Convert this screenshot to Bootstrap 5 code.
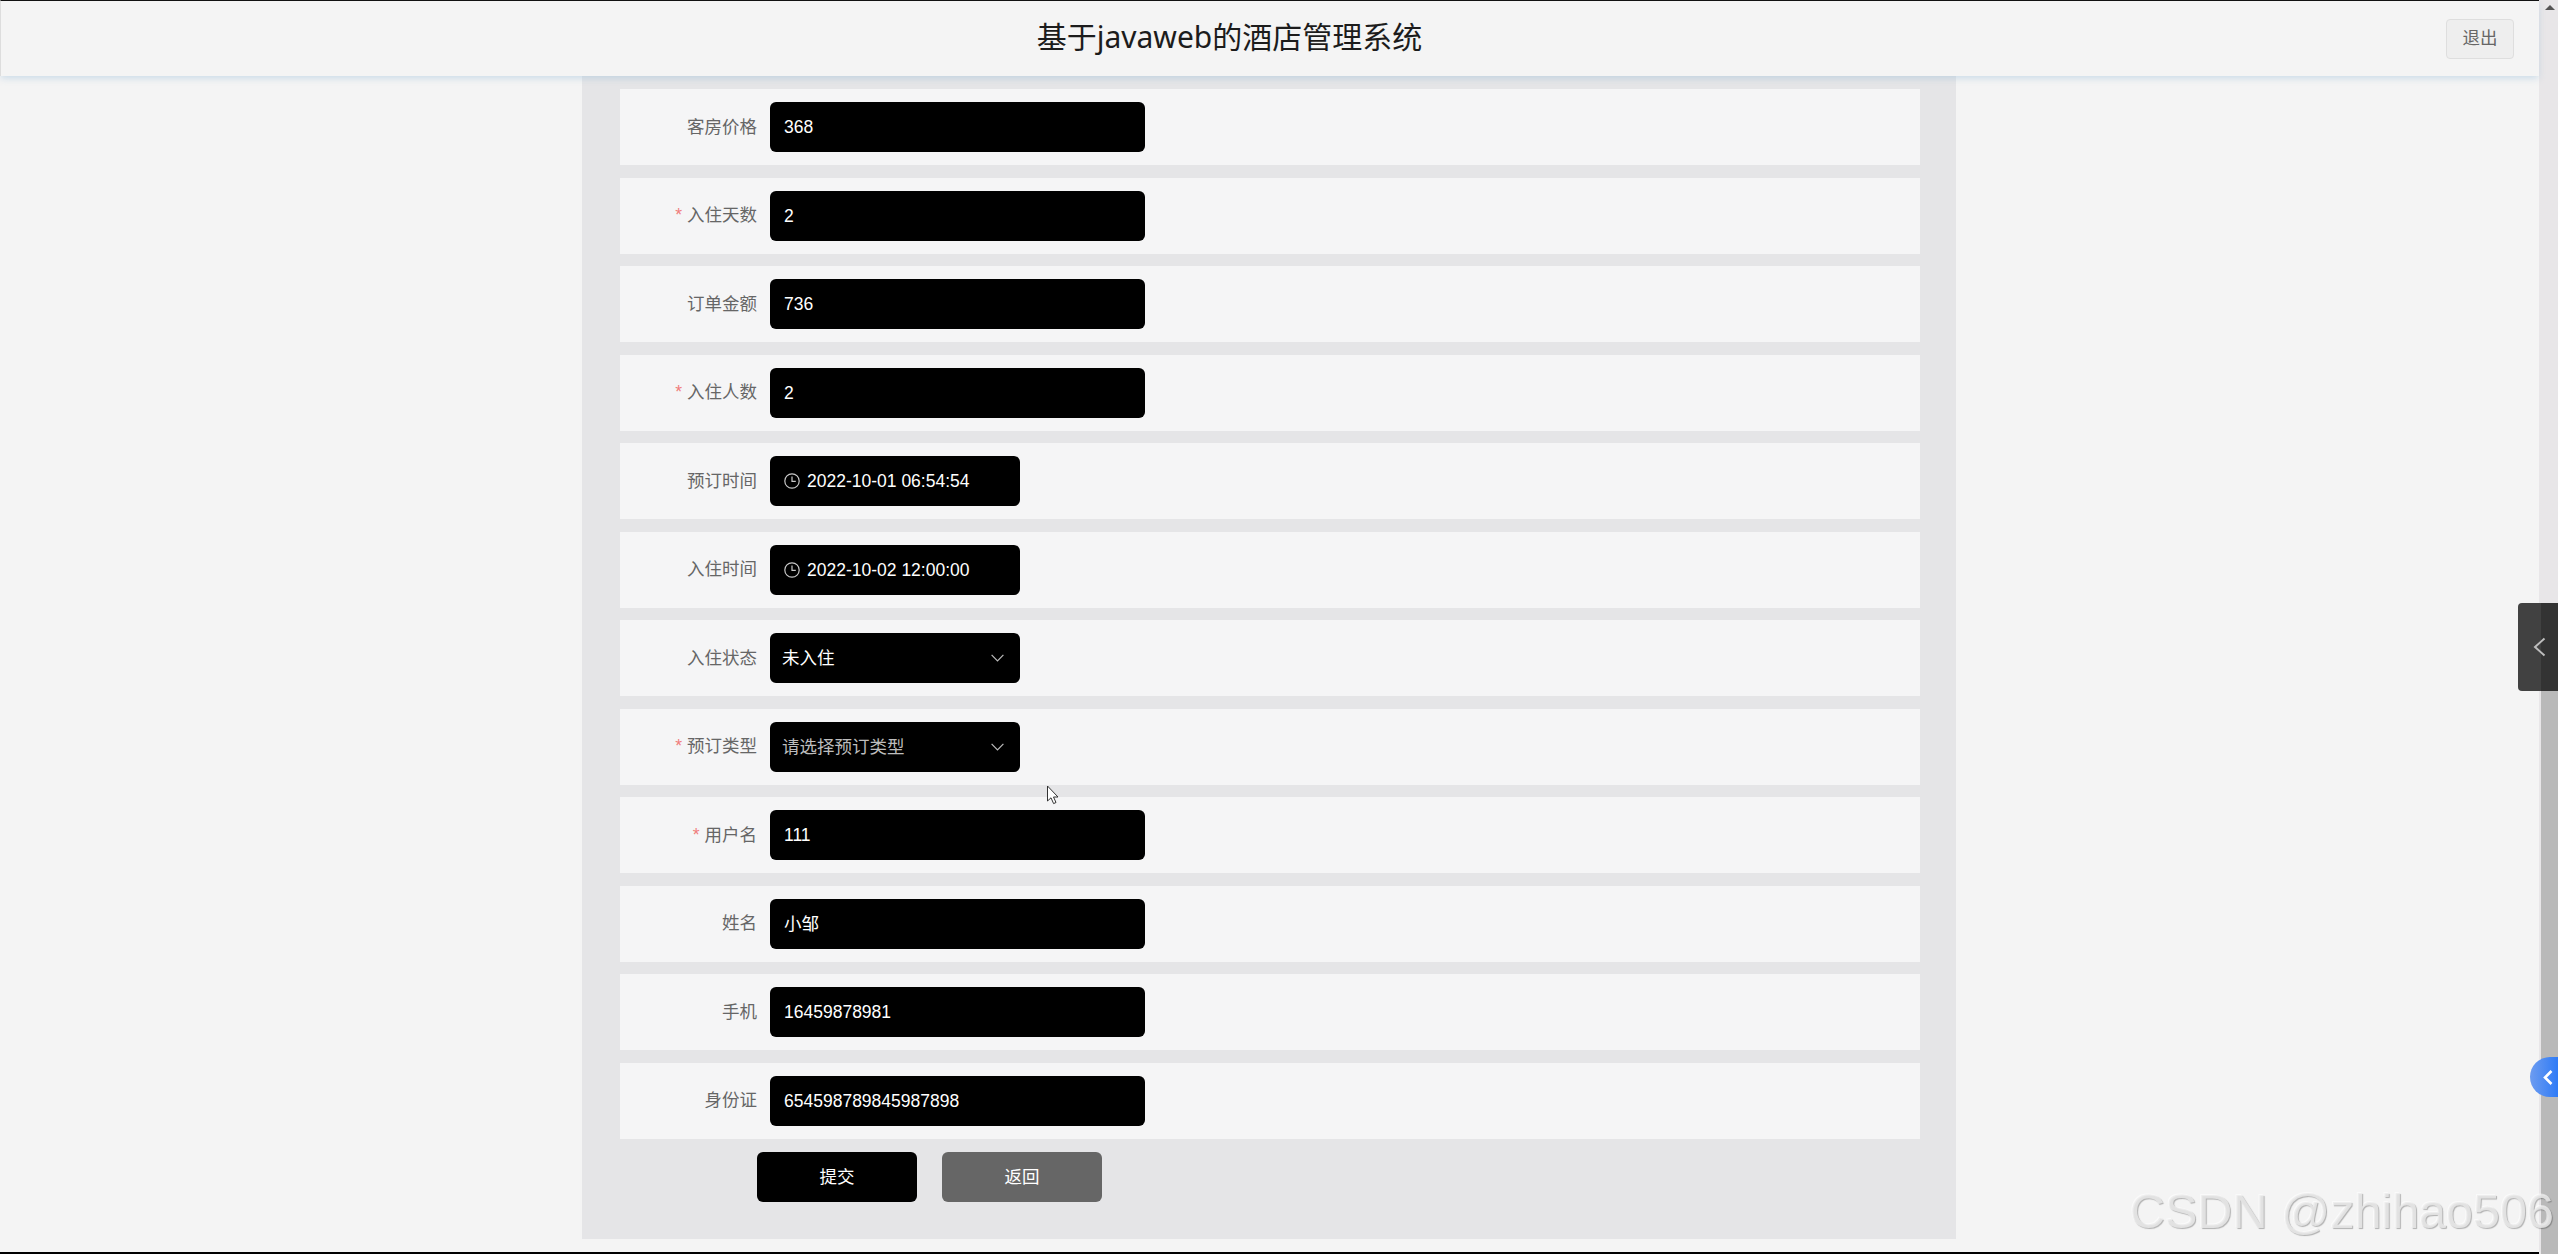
<!DOCTYPE html>
<html lang="zh">
<head>
<meta charset="utf-8">
<title>基于javaweb的酒店管理系统</title>
<link rel="stylesheet" href="https://cdn.jsdelivr.net/npm/bootstrap@5.3.0/dist/css/bootstrap.min.css">
<style>
html,body{height:100%;overflow:hidden;margin:0}
body{background:#f4f4f4;font-family:"Liberation Sans","Noto Sans CJK SC",sans-serif;font-size:17.5px;position:relative}
.shell{height:100vh}
.mainarea{width:2539px;flex:none;height:100%}
.topbar{height:76px;flex:none;border-top:1px solid #111;border-left:1px solid #ddd;background:#f4f4f4;box-shadow:0 3px 7px -1px rgba(140,180,215,.42);position:relative;z-index:2}
.sys-title{font-family:"Noto Sans","Noto Sans CJK SC",sans-serif;font-size:30px;color:#1c1c1c;line-height:1;padding:0 0 3px 12px;margin:0;font-weight:400}
.quit-btn{width:68px;height:40px;margin-right:25px;padding:0;background:#eee;border:1px solid #dedede;border-radius:4px;color:#666;font-size:17.5px}
.panel-box{width:1374px;margin-left:582px;background:#e5e5e7;padding:13px 36px 37px 38px}
.frow{height:76px;margin-bottom:12.5px;background:#f5f5f6}
.flabel{width:137px;margin-right:13px;color:#666;text-align:right;flex:none}
.req{color:#f07c7c;margin-right:5px}
.form-control.fld{width:375px;height:50px;background:#000;color:#fff;border:0;border-radius:6px;padding:0 14px;font-size:17.5px;line-height:50px;flex:none}
.form-control.fld-sm{width:250px}
.form-control.fld-sel{padding:0 16px 0 12px;width:250px}
.clock-ico{width:16px;height:16px;margin-right:7px;flex:none}
.chev-ico{width:13px;height:8px}
.ph{color:#bdbdbd}
.act-row{padding:1px 0 0 137px}
.btn.act-btn{width:160px;height:50px;padding:0;border:0;border-radius:6px;color:#fff;font-size:17.5px;background:#000}
.btn.act-btn.act-back{background:#666;margin-left:25px}
.footline{height:2px;background:#000;flex:none}
.scrollcol{width:19px;flex:none;background:#e8e6e8;height:100%}
.scroll-up{height:650px;padding:5px 0 0 6px;flex:none}
.scroll-up svg{display:block;width:10px;height:5px}
.scroll-thumb{margin-left:2px;background:#b9b9b9;flex:1 1 auto}
.tab-dark{position:absolute;right:0;top:603px;width:40px;height:88px;border-radius:4px 0 0 4px;background:linear-gradient(90deg,#414141 0,#414141 23px,#333 23px,#333 100%);z-index:3}
.tab-dark svg{position:absolute;left:15px;top:34px;width:13px;height:20px}
.tab-blue{position:absolute;right:0;top:1057px;width:28px;height:40px;border-radius:20px 0 0 20px;background:linear-gradient(90deg,#6d9cf0,#2f7bf6);z-index:3}
.tab-blue svg{position:absolute;left:13px;top:13px;width:10px;height:15px}
.wmark{position:absolute;left:2130px;top:1182px;font-family:"Liberation Sans",sans-serif;font-size:48.5px;line-height:58px;color:rgba(236,236,236,.82);text-shadow:1px 1px 1px rgba(0,0,0,.28),-1px -1px 0 rgba(255,255,255,.55);white-space:nowrap;z-index:4}
.mouse-ptr{position:absolute;left:1046px;top:785px;width:14px;height:20px;z-index:4}
</style>
</head>
<body>
<div class="shell d-flex">
  <div class="mainarea d-flex flex-column">
    <header class="topbar d-flex align-items-center">
      <h1 class="sys-title flex-grow-1 text-center">基于javaweb的酒店管理系统</h1>
      <button type="button" class="btn quit-btn">退出</button>
    </header>
    <main class="panel-box">
      <div class="frow d-flex align-items-center"><div class="flabel">客房价格</div><div class="form-control fld">368</div></div>
      <div class="frow d-flex align-items-center"><div class="flabel"><span class="req">*</span>入住天数</div><div class="form-control fld">2</div></div>
      <div class="frow d-flex align-items-center"><div class="flabel">订单金额</div><div class="form-control fld">736</div></div>
      <div class="frow d-flex align-items-center"><div class="flabel"><span class="req">*</span>入住人数</div><div class="form-control fld">2</div></div>
      <div class="frow d-flex align-items-center"><div class="flabel">预订时间</div><div class="form-control fld fld-sm d-flex align-items-center"><svg class="clock-ico" viewBox="0 0 16 16" fill="none" stroke="#c8c8c8" stroke-width="1.2"><circle cx="8" cy="8" r="7.2"/><path d="M8 3.6V8.4H11.8"/></svg>2022-10-01 06:54:54</div></div>
      <div class="frow d-flex align-items-center"><div class="flabel">入住时间</div><div class="form-control fld fld-sm d-flex align-items-center"><svg class="clock-ico" viewBox="0 0 16 16" fill="none" stroke="#c8c8c8" stroke-width="1.2"><circle cx="8" cy="8" r="7.2"/><path d="M8 3.6V8.4H11.8"/></svg>2022-10-02 12:00:00</div></div>
      <div class="frow d-flex align-items-center"><div class="flabel">入住状态</div><div class="form-control fld fld-sel d-flex align-items-center justify-content-between"><span>未入住</span><svg class="chev-ico" viewBox="0 0 13 8" fill="none" stroke="#bbb" stroke-width="1.2"><path d="M.6.8 6.5 7 12.4.8"/></svg></div></div>
      <div class="frow d-flex align-items-center"><div class="flabel"><span class="req">*</span>预订类型</div><div class="form-control fld fld-sel d-flex align-items-center justify-content-between"><span class="ph">请选择预订类型</span><svg class="chev-ico" viewBox="0 0 13 8" fill="none" stroke="#bbb" stroke-width="1.2"><path d="M.6.8 6.5 7 12.4.8"/></svg></div></div>
      <div class="frow d-flex align-items-center"><div class="flabel"><span class="req">*</span>用户名</div><div class="form-control fld">111</div></div>
      <div class="frow d-flex align-items-center"><div class="flabel">姓名</div><div class="form-control fld">小邹</div></div>
      <div class="frow d-flex align-items-center"><div class="flabel">手机</div><div class="form-control fld">16459878981</div></div>
      <div class="frow d-flex align-items-center"><div class="flabel">身份证</div><div class="form-control fld">654598789845987898</div></div>
      <div class="act-row d-flex">
        <button type="button" class="btn act-btn">提交</button>
        <button type="button" class="btn act-btn act-back">返回</button>
      </div>
    </main>
    <div class="footline mt-auto"></div>
  </div>
  <div class="scrollcol d-flex flex-column">
    <div class="scroll-up"><svg viewBox="0 0 10 5"><polygon points="5,0 10,5 0,5" fill="#555"/></svg></div>
    <div class="scroll-thumb"></div>
  </div>
</div>
<div class="tab-dark"><svg viewBox="0 0 13 20" fill="none" stroke="#bdbdbd" stroke-width="2"><path d="M11.5 1.5 2 10l9.5 8.5"/></svg></div>
<div class="tab-blue"><svg viewBox="0 0 10 15" fill="none" stroke="#fff" stroke-width="2.6"><path d="M8.5 1 2 7.5 8.5 14"/></svg></div>
<svg class="mouse-ptr" viewBox="0 0 14 20"><path d="M1.5 1V16L5 12.8 7.6 18.6 10 17.5 7.5 12H12Z" fill="#fff" stroke="#333" stroke-width="1"/></svg>
<div class="wmark">CSDN @zhihao506</div>
<script src="https://cdn.jsdelivr.net/npm/bootstrap@5.3.0/dist/js/bootstrap.bundle.min.js"></script>
</body>
</html>
